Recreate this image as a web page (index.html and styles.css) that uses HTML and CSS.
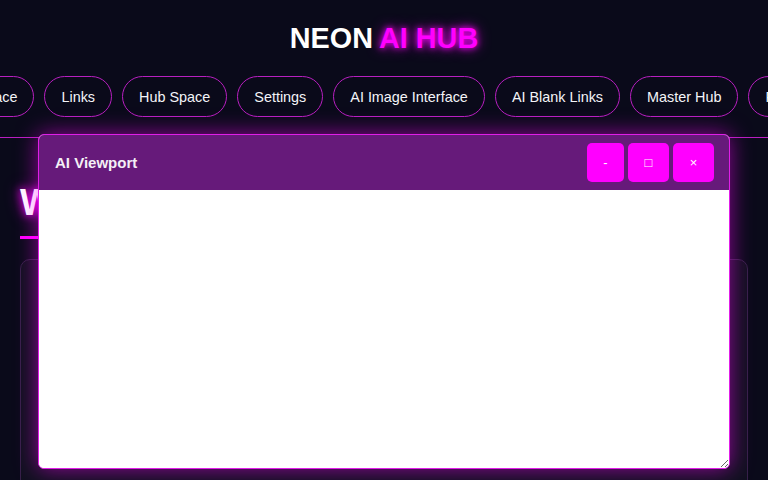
FILE: index.html
```html
<!DOCTYPE html>
<html lang="en">
<head>
    <meta charset="UTF-8">
    <meta name="viewport" content="width=device-width, initial-scale=1.0">
    <title>Neon AI Hub</title>
    <link rel="stylesheet" href="styles.css">
</head>
<body>
    <header class="top">
        <h1 class="logo">NEON<span class="glow">AI HUB</span></h1>
        <nav class="nav">
            <a class="pill" href="#">AI Workspace</a>
            <a class="pill" href="#">Links</a>
            <a class="pill" href="#">Hub Space</a>
            <a class="pill" href="#">Settings</a>
            <a class="pill" href="#">AI Image Interface</a>
            <a class="pill" href="#">AI Blank Links</a>
            <a class="pill" href="#">Master Hub</a>
            <a class="pill" href="#">Prompt Lab</a>
        </nav>
    </header>

    <main class="main">
        <h2 class="welcome">Welcome to the Hub</h2>
        <div class="card">
            <p class="card-text">Pick a tool from the menu above to get started.</p>
        </div>
    </main>

    <!-- floating window -->
    <div class="viewport">
        <div class="viewport-bar">
            <span class="viewport-title">AI Viewport</span>
            <div class="controls">
                <button class="ctl ctl-min">-</button>
                <button class="ctl">&#9633;</button>
                <button class="ctl">&times;</button>
            </div>
        </div>
        <div class="viewport-body"></div>
    </div>
</body>
</html>
```

FILE: styles.css
```css
body {
    margin: 0;
    background-color: #0a0a1a;
    font-family: "Liberation Sans", Arial, sans-serif;
    color: #f0f0f5;
}

.top {
    padding: 22px 0 20px;
    border-bottom: 1px solid #b81fc0;
    text-align: center;
}

.logo {
    margin: 0;
    font-size: 1.8rem;
    color: #fff;
}
.glow {
    margin-left: 6px;
    color: #ff00ff;
    text-shadow: 0 0 6px #ff00ff, 0 0 14px rgba(255, 0, 255, 0.7);
}

.nav {
    margin-top: 21px;
    display: flex;
    justify-content: center;
    gap: 10px;
    overflow: hidden;
}
.pill {
    flex-shrink: 0;
    white-space: nowrap;
    padding: 11.5px 16px;
    border: 1px solid #b81fc0;
    border-radius: 22px;
    color: #f4f4f8;
    text-decoration: none;
    font-size: 0.9rem;
}

.main {
    padding: 20px;
}
.welcome {
    display: inline-block;
    margin: 24px 0 20px;
    padding-bottom: 12px;
    border-bottom: 3px solid #ff00ff;
    font-size: 2.25rem;
    color: #fff;
    text-shadow: 0 0 8px #ff00ff, 0 0 16px rgba(255, 0, 255, 0.6);
}
.card {
    height: 300px;
    background-color: #10101f;
    border: 1px solid #352048;
    border-radius: 10px;
    padding: 20px;
}
.card-text {
    margin: 0;
    color: #c8c8d8;
}

.viewport {
    position: absolute;
    left: 38px;
    top: 134px;
    width: 692px;
    height: 335px;
    box-sizing: border-box;
    display: flex;
    flex-direction: column;
    border: 1px solid #e01ee8;
    border-radius: 6px;
    background-color: #fff;
    box-shadow: 0 0 22px rgba(255, 0, 255, 0.55);
    resize: both;
    overflow: hidden;
}
.viewport-bar {
    height: 55px;
    box-sizing: border-box;
    display: flex;
    align-items: center;
    justify-content: space-between;
    padding: 0 15px 0 16px;
    background-color: #661a7a;
}
.viewport-title {
    font-weight: bold;
    font-size: 15px;
    color: #f4f0f6;
}
.controls {
    display: flex;
    gap: 4px;
}
.ctl {
    width: 41px;
    height: 39px;
    padding: 0;
    border: none;
    border-radius: 5px;
    background-color: #ff00ff;
    color: #fff;
    font-family: "Liberation Sans", "DejaVu Sans", sans-serif;
    font-size: 13px;
}
.ctl-min {
    width: 37px;
}
.viewport-body {
    flex: 1;
    background-color: #fff;
}
```
